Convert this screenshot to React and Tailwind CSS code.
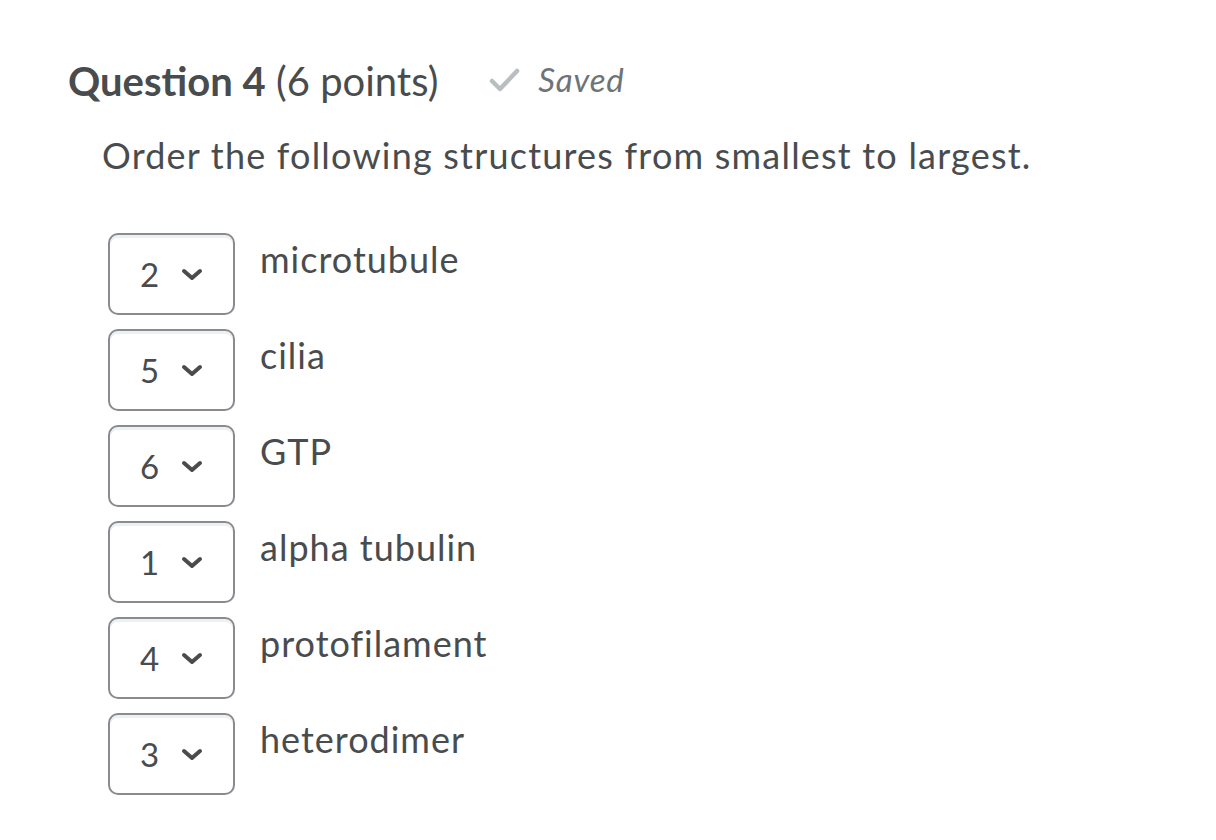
const items = [
  { value: 2, label: 'microtubule' },
  { value: 5, label: 'cilia' },
  { value: 6, label: 'GTP' },
  { value: 1, label: 'alpha tubulin' },
  { value: 4, label: 'protofilament' },
  { value: 3, label: 'heterodimer' },
];

const Chevron = () => (
  <svg width="22" height="13" viewBox="0 0 22 13" fill="none">
    <path d="M3 3l8 7 8-7" stroke="#494c4e" strokeWidth="4" strokeLinecap="round" strokeLinejoin="round" />
  </svg>
);

const Check = () => (
  <svg width="31" height="24" viewBox="0 0 31 24" fill="none">
    <path d="M3 13l8 8L28 3" stroke="#b9bec1" strokeWidth="4.5" strokeLinecap="round" strokeLinejoin="round" />
  </svg>
);

export default function App() {
  return (
    <div className="min-h-screen bg-white text-[#494c4e]" style={{ fontFamily: 'Lato, "Noto Sans", sans-serif' }}>
      <div className="pl-[68px] pt-[57px]">
        <div className="flex items-center">
          <h2 className="text-[40px] leading-[48px]">
            <span className="font-bold">Question 4</span> (6 points)
          </h2>
          <div className="ml-[51px] flex items-center gap-[18px] -mt-[2px]">
            <Check />
            <span className="text-[33px] italic tracking-[0.8px] text-[#6e7377]">Saved</span>
          </div>
        </div>

        <p className="ml-[34px] mt-[28px] text-[36px] leading-[44px] tracking-[1.2px]">
          Order the following structures from smallest to largest.
        </p>

        <div className="ml-[40px] mt-[56px] flex flex-col gap-[14px]">
          {items.map((it) => (
            <div key={it.label} className="flex items-start">
              <div className="flex h-[82px] w-[127px] items-center rounded-[10px] border-2 border-[#888c90] pl-[30px] shadow-[inset_0_3px_0_#eef0f1]">
                <span className="w-[41px] text-[33px] leading-none">{it.value}</span>
                <Chevron />
              </div>
              <span className="ml-[25px] mt-[4px] text-[36px] leading-[44px] tracking-[1px]">{it.label}</span>
            </div>
          ))}
        </div>
      </div>
    </div>
  );
}
